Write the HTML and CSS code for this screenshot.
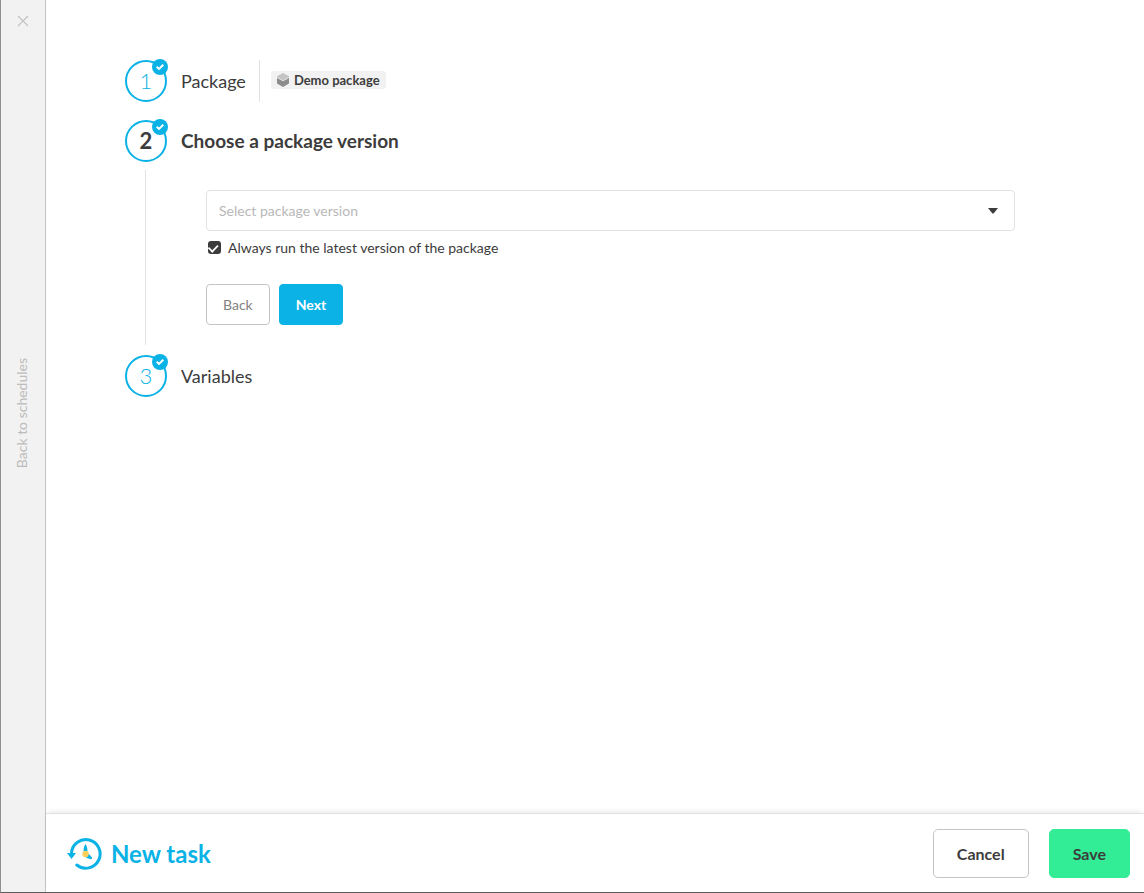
FILE: index.html
```html
<!DOCTYPE html>
<html lang="en">
<head>
  <meta charset="UTF-8" />
  <meta name="viewport" content="width=device-width, initial-scale=1.0" />
  <title>New task</title>
  <link rel="stylesheet" href="styles.css">
</head>
<body>
  <svg class="sprite" aria-hidden="true">
    <symbol id="tick" viewBox="0 0 16 16">
      <circle cx="8" cy="8" r="8" />
      <path d="M4.7 7.7l2.3 2.2 4.3-4.2" fill="none" stroke="#fff" stroke-width="2" />
    </symbol>
  </svg>

  <aside class="side-bar">
    <button class="close" type="button" aria-label="Close">
      <svg width="12" height="12" viewBox="0 0 12 12"><path d="M1 1l10 10M11 1L1 11" /></svg>
    </button>
    <a class="back-link" href="#">Back to schedules</a>
  </aside>

  <div class="panel">
    <main class="steps">
      <section class="step">
        <div class="step-header">
          <span class="step-number">1<svg class="tick"><use href="#tick" /></svg></span>
          <h2>Package</h2>
          <div class="step-summary">
            <span class="tag">
              <svg width="12" height="14" viewBox="0 0 12 14">
                <path d="M6 0l6 3.3v1L6 7.6 0 4.3v-1z" fill="#c4c4c4" />
                <path d="M0 5l6 3.3L12 5v5.500L6 14l-6-3.500z" fill="#8c8c8c" />
              </svg>
              Demo package
            </span>
          </div>
        </div>
      </section>

      <section class="step active">
        <div class="step-header">
          <span class="step-number">2<svg class="tick"><use href="#tick" /></svg></span>
          <h2>Choose a package version</h2>
        </div>
        <form class="step-body">
          <div class="select-box">
            <select aria-label="Package version">
              <option>Select package version</option>
            </select>
            <svg class="arrow" width="10" height="6" viewBox="0 0 10 6"><path d="M0 0h10L6 5q-1 1-2 0z" /></svg>
          </div>
          <div class="check-row">
            <input type="checkbox" id="latest" checked>
            <label for="latest">Always run the latest version of the package</label>
          </div>
          <div class="step-buttons">
            <button class="btn" type="button">Back</button>
            <button class="btn primary" type="button">Next</button>
          </div>
        </form>
      </section>

      <section class="step">
        <div class="step-header">
          <span class="step-number">3<svg class="tick"><use href="#tick" /></svg></span>
          <h2>Variables</h2>
        </div>
      </section>
    </main>

    <footer>
      <svg class="logo" width="35" height="34" viewBox="0 0 35 34">
        <path d="M4.5 17.5A14.3 14.3 0 1 1 9.8 29" fill="none" stroke="#0ab2e6" stroke-width="3" stroke-linecap="round" />
        <path d="M0 17h9l-4.5 6z" fill="#0ab2e6" />
        <path d="M18.5 8q2.600 3.500 1.700 9h-3.400q-.9-5.500 1.700-9z" fill="#0ab2e6" />
        <path d="M19 20l2.500-2.500L25 21.500q.4 1.500-1 1.800-3-.6-5-1.800z" fill="#0ab2e6" />
        <circle cx="18.5" cy="18" r="3.2" fill="#ffcf5c" />
      </svg>
      <h1>New task</h1>
      <button class="btn large" type="button">Cancel</button>
      <button class="btn large save" type="button">Save</button>
    </footer>
  </div>
</body>
</html>
```

FILE: styles.css
```css
* {
  margin: 0;
  padding: 0;
  box-sizing: border-box;
}

body {
  font-family: Lato, 'Open Sans', sans-serif;
  font-size: 14px;
  color: #3c3c3c;
  background-color: white;
  min-height: 100vh;
  display: flex;
  border-left: 1px solid #8f8f8f;
  border-bottom: 1px solid #5c5c5c;
}

button,
select {
  font-family: inherit;
  font-size: inherit;
  cursor: pointer;
}

.sprite {
  position: absolute;
  width: 0;
  height: 0;
}

.side-bar {
  width: 45px;
  padding-bottom: 107px;
  display: flex;
  flex-direction: column;
  align-items: center;
  background-color: #f2f2f2;
  border-right: 1px solid #c4c4c4;
}

.close {
  display: flex;
  padding: 15px;
  border: none;
  background: none;
}

.close path {
  stroke: #c4c4c4;
  stroke-width: 1.3;
}

.back-link {
  margin: auto 0;
  padding-left: 4px;
  writing-mode: vertical-rl;
  transform: rotate(180deg);
  color: #bcbcbc;
  text-decoration: none;
}

.panel {
  flex: 1;
  display: flex;
  flex-direction: column;
}

.steps {
  flex: 1;
  padding: 60px 129px 40px 79px;
}

.step {
  margin-bottom: 18px;
}

.step.active {
  margin-bottom: 10px;
}

.step-header {
  display: flex;
  align-items: center;
}

.step-number {
  position: relative;
  width: 42px;
  height: 42px;
  margin-right: 14px;
  display: flex;
  align-items: center;
  justify-content: center;
  border: 2px solid #0ab2e6;
  border-radius: 50%;
  color: #0ab2e6;
  font-size: 22px;
  line-height: 24px;
  font-weight: 300;
}

.tick {
  position: absolute;
  top: -3px;
  right: -3px;
  width: 16px;
  height: 16px;
  fill: #0ab2e6;
}

.step-header h2 {
  font-size: 18px;
  line-height: 20px;
  font-weight: 400;
}

.active .step-number {
  color: #3c3c3c;
  font-weight: 700;
}

.step.active h2 {
  font-size: 19px;
  font-weight: 700;
}

.step-summary {
  height: 42px;
  margin-left: 13px;
  padding: 11px;
  border-left: 1px solid #e2e2e2;
}

.tag {
  display: flex;
  align-items: center;
  gap: 5px;
  height: 18px;
  padding: 0 6px;
  border-radius: 3px;
  background-color: #f2f2f2;
  font-size: 13px;
  font-weight: 700;
}

.step-body {
  margin: 8px 0 0 20px;
  padding: 20px 0 20px 60px;
  border-left: 1px solid #e2e2e2;
}

.select-box {
  position: relative;
}

.select-box select {
  width: 100%;
  height: 41px;
  padding: 0 12px;
  appearance: none;
  border: 1px solid #e2e2e2;
  border-radius: 4px;
  background-color: white;
  color: #b8b8b8;
}

.arrow {
  position: absolute;
  top: 18px;
  right: 17px;
  fill: #3c3c3c;
  pointer-events: none;
}

.check-row {
  display: flex;
  align-items: center;
  height: 20px;
  margin: 6px 0 27px 2px;
  gap: 7px;
}

.check-row input {
  width: 13px;
  height: 13px;
  padding-top: 2px;
  display: flex;
  justify-content: center;
  appearance: none;
  border-radius: 3px;
  background-color: #3c3c3c;
}

.check-row input:checked::after {
  content: "";
  width: 5px;
  height: 8px;
  border: solid white;
  border-width: 0 2px 2px 0;
  transform: rotate(45deg) scale(0.9);
  transform-origin: 50% 30%;
}

.step-buttons {
  display: flex;
  gap: 9px;
}

.btn {
  height: 41px;
  padding: 0 16px;
  border: 1px solid #c4c4c4;
  border-radius: 4px;
  background-color: white;
  color: #828282;
}

.btn.primary {
  border-color: #0ab2e6;
  background-color: #0ab2e6;
  color: white;
  font-weight: 700;
}

footer {
  display: flex;
  align-items: center;
  height: 79px;
  padding: 0 14px 0 21px;
  border-top: 1px solid #e2e2e2;
  box-shadow: 0 -3px 5px -2px rgba(0, 0, 0, 0.1);
}

footer h1 {
  margin: 0 auto 0 9px;
  color: #0ab2e6;
  font-size: 24px;
  font-weight: 700;
}

.btn.large {
  height: 49px;
  padding: 0 23px;
  border-radius: 5px;
  color: #3c3c3c;
  font-size: 16px;
  font-weight: 700;
}

.btn.save {
  margin-left: 20px;
  border-color: #32ed96;
  background-color: #32ed96;
}
```
